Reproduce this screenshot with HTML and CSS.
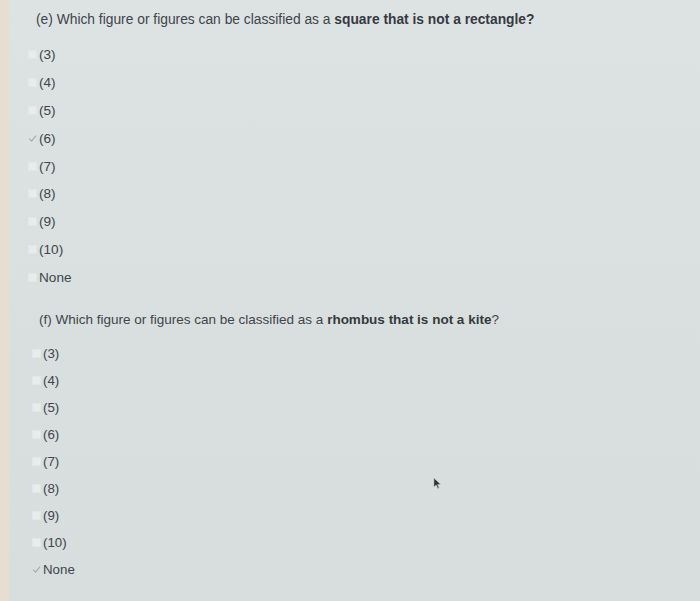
FILE: index.html
```html
<!DOCTYPE html>
<html lang="en">
<head>
<meta charset="utf-8">
<title>Quadrilaterals</title>
<link rel="stylesheet" href="styles.css">
</head>
<body>
<div class="page">
  <section class="q q-e">
    <p class="prompt">(e) Which figure or figures can be classified as a <b>square that is not a rectangle?</b></p>
    <ul class="opts">
      <li><span class="box"></span>(3)</li>
      <li><span class="box"></span>(4)</li>
      <li><span class="box"></span>(5)</li>
      <li><span class="box checked"><svg viewBox="0 0 10 10" width="11" height="11"><path d="M1.2 5 L3.9 8 L9 1.8" fill="none" stroke="#a2aaae" stroke-width="1.2"/></svg></span>(6)</li>
      <li><span class="box"></span>(7)</li>
      <li><span class="box"></span>(8)</li>
      <li><span class="box"></span>(9)</li>
      <li><span class="box"></span>(10)</li>
      <li><span class="box"></span>None</li>
    </ul>
  </section>
  <section class="q q-f">
    <p class="prompt">(f) Which figure or figures can be classified as a <b>rhombus that is not a kite</b>?</p>
    <ul class="opts">
      <li><span class="box"></span>(3)</li>
      <li><span class="box"></span>(4)</li>
      <li><span class="box"></span>(5)</li>
      <li><span class="box"></span>(6)</li>
      <li><span class="box"></span>(7)</li>
      <li><span class="box"></span>(8)</li>
      <li><span class="box"></span>(9)</li>
      <li><span class="box"></span>(10)</li>
      <li><span class="box checked"><svg viewBox="0 0 10 10" width="11" height="11"><path d="M1.2 5 L3.9 8 L9 1.8" fill="none" stroke="#a2aaae" stroke-width="1.2"/></svg></span>None</li>
    </ul>
  </section>
  <svg class="cursor" viewBox="0 0 10 14" width="9" height="13"><path d="M1 1 L1 11 L3.6 8.6 L5.4 12.6 L6.8 12 L5.1 8.1 L8.6 8 Z" fill="#2f3338" stroke="#c9cfd0" stroke-width="0.6"/></svg>
</div>
</body>
</html>
```
FILE: styles.css
```css
html, body {
  margin: 0;
  padding: 0;
}
body {
  background: #dbe1e0;
  font-family: "Liberation Sans", Arial, sans-serif;
  color: #40444c;
}
.page {
  position: relative;
  width: 700px;
  height: 601px;
  box-sizing: border-box;
  border-left: 9px solid #e7ddd1;
  background: linear-gradient(180deg, #dde3e2 0%, #d9dfde 60%, #d7dedd 100%);
  overflow: hidden;
}
.q {
  margin: 0;
}
.prompt {
  margin: 0;
  line-height: 20px;
  font-size: 13.8px;
}
.prompt b {
  font-weight: bold;
  color: #363940;
}
.opts {
  list-style: none;
  margin: 0;
  padding: 0;
}
.opts li {
  display: flex;
  align-items: center;
  font-size: 13.6px;
}
.box {
  width: 9px;
  height: 9px;
  background: #e9ecec;
  box-shadow: inset 0 0 0 1px #e2e6e6;
  margin-right: 2px;
  flex: none;
  display: flex;
  align-items: center;
  justify-content: center;
}
.box.checked {
  background: transparent;
  box-shadow: none;
}
.q-e {
  padding-top: 10px;
}
.q-e .prompt {
  padding-left: 27px;
}
.q-e .opts {
  margin-top: 11px;
  padding-left: 19px;
}
.q-e .opts li {
  height: 27.8px;
}
.q-f {
  padding-top: 19px;
}
.q-f .prompt {
  padding-left: 30px;
  font-size: 13.5px;
}
.q-f .opts {
  margin-top: 9.5px;
  padding-left: 23px;
}
.q-f .opts li {
  height: 27.1px;
  font-size: 13.3px;
}
.cursor {
  position: absolute;
  left: 424px;
  top: 477px;
}
```
